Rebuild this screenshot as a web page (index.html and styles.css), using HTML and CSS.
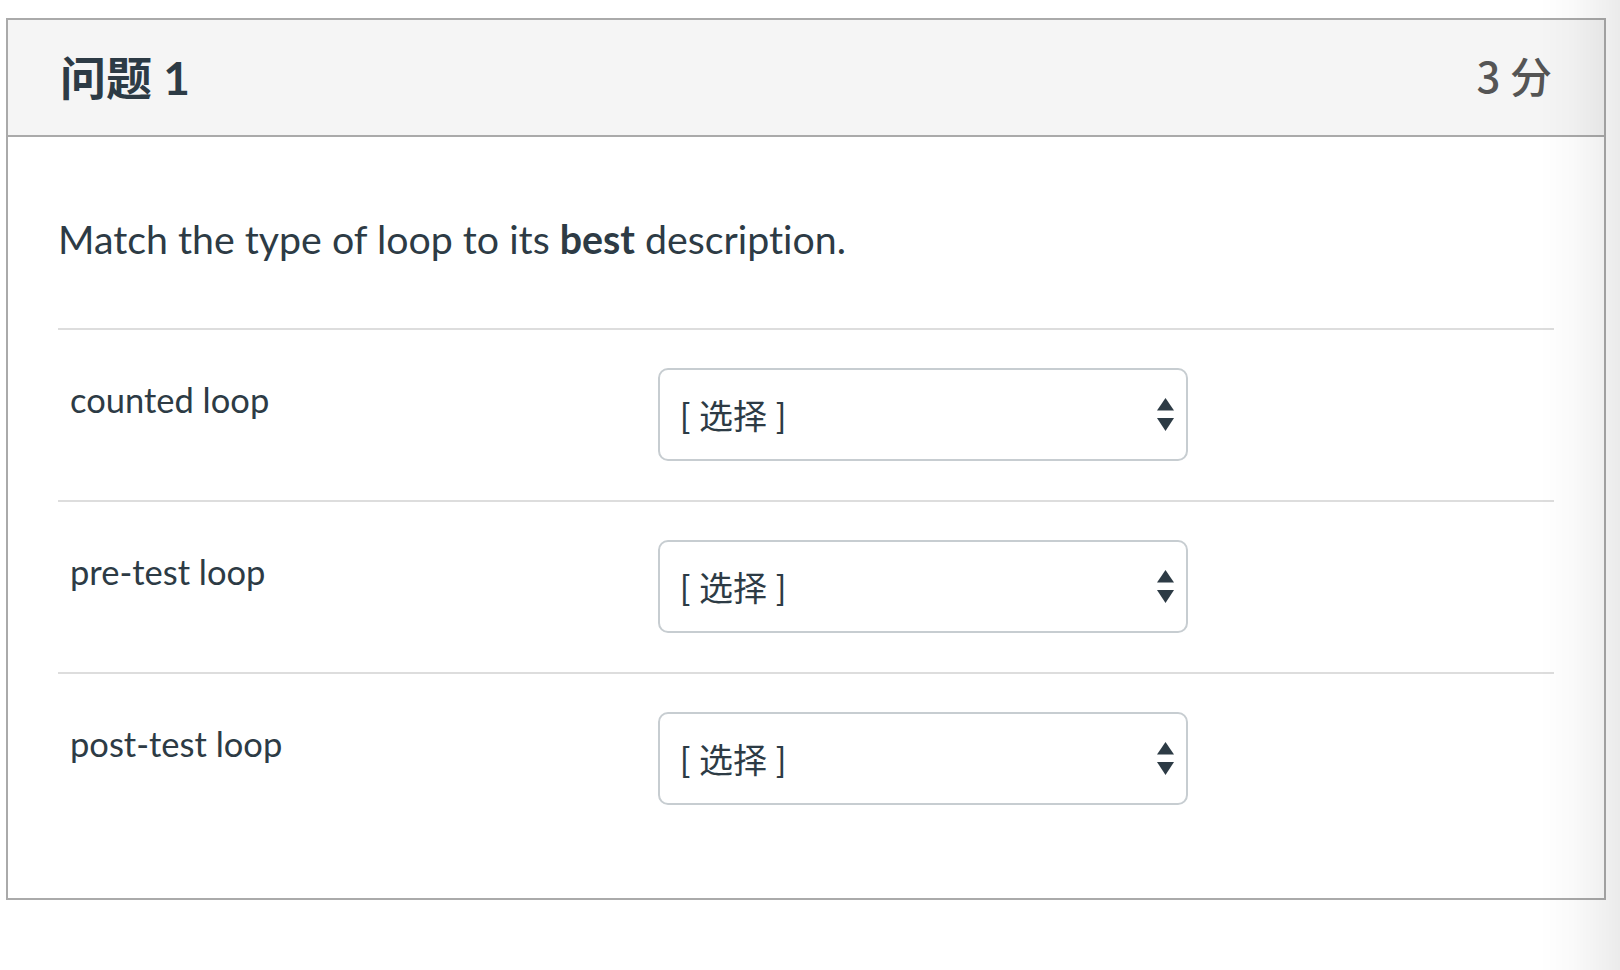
FILE: index.html
```html
<!DOCTYPE html>
<html lang="zh">
<head>
<meta charset="utf-8">
<title>问题 1</title>
<link rel="stylesheet" href="styles.css">
</head>
<body>
<div class="card">
  <div class="header">
    <span class="title">问题 1</span>
    <span class="points">3 分</span>
  </div>
  <div class="content">
    <p class="prompt">Match the type of loop to its <strong>best</strong> description.</p>
    <div class="row">
      <div class="label">counted loop</div>
      <div class="select"><span>[ 选择 ]</span><svg class="arrows" viewBox="0 0 17 33" width="17" height="33"><path d="M8.5 0 L17 12.5 L0 12.5 Z"/><path d="M0 20 L17 20 L8.5 33 Z"/></svg></div>
    </div>
    <div class="row">
      <div class="label">pre-test loop</div>
      <div class="select"><span>[ 选择 ]</span><svg class="arrows" viewBox="0 0 17 33" width="17" height="33"><path d="M8.5 0 L17 12.5 L0 12.5 Z"/><path d="M0 20 L17 20 L8.5 33 Z"/></svg></div>
    </div>
    <div class="row">
      <div class="label">post-test loop</div>
      <div class="select"><span>[ 选择 ]</span><svg class="arrows" viewBox="0 0 17 33" width="17" height="33"><path d="M8.5 0 L17 12.5 L0 12.5 Z"/><path d="M0 20 L17 20 L8.5 33 Z"/></svg></div>
    </div>
  </div>
</div>
<div class="edge-shadow"></div>
</body>
</html>
```

FILE: styles.css
```css
html, body {
  margin: 0;
  padding: 0;
  background: #fff;
}
body {
  font-family: Lato, "Noto Sans CJK SC", sans-serif;
  color: #2d3b45;
  height: 970px;
  overflow: hidden;
  font-variant-ligatures: none;
}
.card {
  margin: 18px 0 0 6px;
  width: 1600px;
  box-sizing: border-box;
  border: 2px solid #aaaaaa;
  background: #fff;
}
.header {
  height: 117px;
  box-sizing: border-box;
  background: #f5f5f5;
  border-bottom: 2px solid #aaaaaa;
  display: flex;
  align-items: center;
  justify-content: space-between;
  padding: 0 52px 6px 52px;
}
.title {
  font-family: Lato, "Noto Sans CJK SC", sans-serif;
  font-weight: 700;
  font-size: 46px;
  color: #2d3b45;
}
.points {
  font-family: "Noto Sans CJK SC", sans-serif;
  font-weight: 500;
  font-size: 42px;
  color: #555555;
}
.content {
  padding: 73px 50px 54px 50px;
}
.prompt {
  margin: 0 0 61px 0;
  font-size: 39.3px;
  line-height: 57px;
}
.prompt strong {
  font-weight: 700;
}
.row {
  display: flex;
  align-items: flex-start;
  border-top: 2px solid #dddddd;
  padding: 38px 0 39px 0;
}
.label {
  width: 588px;
  padding: 6px 0 0 12px;
  font-size: 34.5px;
  line-height: 51px;
}
.select {
  width: 530px;
  height: 93px;
  box-sizing: border-box;
  border: 2px solid #c7cdd1;
  border-radius: 10px;
  display: flex;
  align-items: center;
  justify-content: space-between;
  padding: 0 12px 0 20px;
  font-family: Lato, "Noto Sans CJK SC", sans-serif;
  font-size: 34px;
  color: #2d3b45;
}
.arrows {
  fill: #2d3b45;
}
.edge-shadow {
  position: fixed;
  top: 0;
  right: 0;
  width: 80px;
  height: 970px;
  pointer-events: none;
  background: linear-gradient(to right, rgba(0,0,0,0) 0%, rgba(0,0,0,0.02) 40%, rgba(0,0,0,0.08) 100%);
}
```
